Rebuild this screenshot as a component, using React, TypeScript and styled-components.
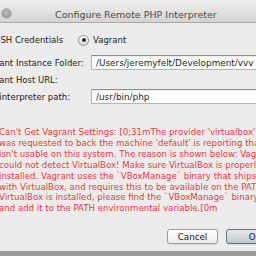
import styled, { createGlobalStyle } from "styled-components";

const GlobalStyle = createGlobalStyle`
  html, body {
    margin: 0;
    padding: 0;
    background: #9b9b9b;
  }
  * {
    box-sizing: border-box;
  }
`;

const errorLines = [
  "Can't Get Vagrant Settings: [0;31mThe provider 'virtualbox' that you",
  "was requested to back the machine 'default' is reporting that it",
  "isn't usable on this system. The reason is shown below: Vagrant",
  "could not detect VirtualBox! Make sure VirtualBox is properly",
  "installed. Vagrant uses the `VBoxManage` binary that ships",
  "with VirtualBox, and requires this to be available on the PATH. If",
  "VirtualBox is installed, please find the `VBoxManage` binary",
  "and add it to the PATH environmental variable.[0m",
];

const App = () => {
  return (
    <Page>
      <GlobalStyle />
      <Window>
        <TitleBar>
          <Light />
          <Title>Configure Remote PHP Interpreter</Title>
        </TitleBar>
        <Body>
          <RadioRow>
            <RadioOption>
              <Radio />
              <span>SSH Credentials</span>
            </RadioOption>
            <RadioOption>
              <Radio checked />
              <span>Vagrant</span>
            </RadioOption>
          </RadioRow>
          <Form>
            <Label>Vagrant Instance Folder:</Label>
            <Field>/Users/jeremyfelt/Development/vvv</Field>
            <Label>Vagrant Host URL:</Label>
            <span />
            <Label>PHP interpreter path:</Label>
            <Field>/usr/bin/php</Field>
          </Form>
          <ErrorText>
            {errorLines.map((line) => (
              <ErrorLine key={line}>{line}</ErrorLine>
            ))}
          </ErrorText>
          <Buttons>
            <Button>Cancel</Button>
            <Button primary>OK</Button>
          </Buttons>
        </Body>
      </Window>
    </Page>
  );
};

const Page = styled.div`
  width: 256px;
  height: 256px;
  overflow: hidden;
  background: #9b9b9b;
  font-family: "DejaVu Sans", "Liberation Sans", sans-serif;
`;

const Window = styled.div`
  width: 320px;
  height: 251px;
  margin-left: -20px;
  background: #ececec;
  display: flex;
  flex-direction: column;
`;

const TitleBar = styled.div`
  height: 23px;
  display: flex;
  align-items: center;
  padding-left: 22px;
  background: linear-gradient(#f0f0f0, #d4d4d4);
  border-bottom: 1px solid #a9a9a9;
`;

const Light = styled.div`
  width: 9px;
  height: 9px;
  border-radius: 50%;
  margin-top: 5px;
  background: radial-gradient(circle at 50% 40%, #b9b9b9, #8f8f8f);
  box-shadow: 0 0 0 0.5px #7c7c7c;
`;

const Title = styled.div`
  margin-left: 44px;
  margin-top: 6px;
  font-size: 9.5px;
  color: #4d4d4d;
  white-space: nowrap;
`;

const Body = styled.div`
  flex: 1;
  display: flex;
  flex-direction: column;
  padding-top: 10px;
  font-size: 8.5px;
  color: #222;
`;

const RadioRow = styled.div`
  height: 14px;
  display: flex;
  align-items: center;
  gap: 15px;
`;

const RadioOption = styled.label`
  display: flex;
  align-items: center;
  gap: 4px;
  white-space: nowrap;
`;

const Radio = styled.span<{ checked?: boolean }>`
  width: 11px;
  height: 11px;
  border-radius: 50%;
  border: 1px solid #8c8c8c;
  background: linear-gradient(#ffffff, #d9d9d9);
  display: flex;
  align-items: center;
  justify-content: center;
  &::after {
    content: "";
    width: 4px;
    height: 4px;
    border-radius: 50%;
    background: ${(p) => (p.checked ? "#2b2b2b" : "transparent")};
  }
`;

const Form = styled.div`
  margin-top: 8px;
  display: grid;
  grid-template-columns: 111px 1fr;
  grid-auto-rows: 15px;
  row-gap: 2px;
  align-items: center;
`;

const Label = styled.div`
  white-space: nowrap;
`;

const Field = styled.div`
  height: 15px;
  padding: 0 4px;
  display: flex;
  align-items: center;
  background: #fff;
  border: 1px solid #b4b4b4;
  border-top-color: #8e8e8e;
  box-shadow: inset 0 1px 1px rgba(0, 0, 0, 0.08);
  font-size: 8.9px;
  color: #1e1e1e;
  white-space: nowrap;
  overflow: hidden;
`;

const ErrorText = styled.div`
  margin-top: 23px;
  margin-left: 19px;
  color: #ec3a40;
  font-size: 8.6px;
  line-height: 10.9px;
`;

const ErrorLine = styled.div`
  white-space: nowrap;
`;

const Buttons = styled.div`
  margin-top: 15px;
  display: flex;
  padding-left: 187px;
  gap: 8px;
`;

const Button = styled.div<{ primary?: boolean }>`
  width: ${(p) => (p.primary ? "58px" : "51px")};
  height: 15px;
  border-radius: 3px;
  display: flex;
  align-items: center;
  justify-content: center;
  font-size: 8.7px;
  color: #1a1a1a;
  border: 1px solid ${(p) => (p.primary ? "#6e7073" : "#9d9d9d")};
  background: ${(p) =>
    p.primary
      ? "linear-gradient(#e6e9ec, #c3c8ce)"
      : "linear-gradient(#ffffff, #ebebeb)"};
  box-shadow: 0 1px 0 rgba(0, 0, 0, 0.08);
`;

export default App;
